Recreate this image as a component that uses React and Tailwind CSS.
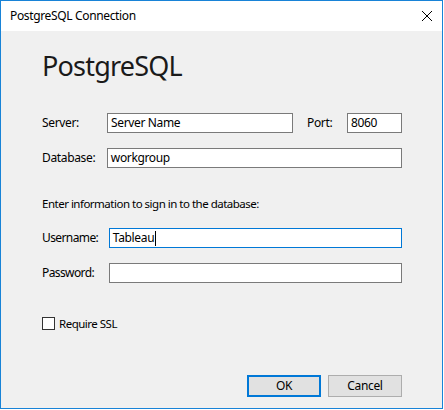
import React from "react";

const font = { fontFamily: '"Segoe UI", "Noto Sans", "Open Sans", sans-serif' };

function Field({ value, className = "", focused = false, cursor = false }) {
  return (
    <div
      className={`h-[20px] flex items-center px-[3px] bg-white border text-[12px] text-black ${
        focused ? "border-[#0078d7]" : "border-[#7a7a7a]"
      } ${className}`}
    >
      <span>{value}</span>
      {cursor && <span className="w-px h-[15px] bg-black ml-[1px]" />}
    </div>
  );
}

export default function App() {
  return (
    <div className="w-[444px] h-[410px] bg-white tracking-[-0.35px]" style={font}>
      <div className="w-[443px] h-[409px] border border-[#1883d7] flex flex-col bg-[#f0f0f0]">
        <div className="h-[30px] bg-white flex items-center justify-between pl-[9px] pr-[8px] text-[12px] text-black">
          <span>PostgreSQL Connection</span>
          <svg width="12" height="12" viewBox="0 0 12 12" className="mr-[1px]">
            <path d="M1 1 L11 11 M11 1 L1 11" stroke="#000" strokeWidth="1" fill="none" />
          </svg>
        </div>
        <div className="flex-1 flex flex-col pl-[41px] pr-[40px] pt-[21px] text-[12px] text-black">
          <div className="text-[27px] leading-[28px] tracking-[-0.8px] text-[#1a1a1a]">PostgreSQL</div>

          <div className="mt-[33px] flex items-center">
            <span className="w-[65px]">Server:</span>
            <Field value="Server Name" className="w-[186px]" />
            <span className="ml-[14px] w-[40px]">Port:</span>
            <Field value="8060" className="w-[55px]" />
          </div>

          <div className="mt-[15px] flex items-center">
            <span className="w-[65px]">Database:</span>
            <Field value="workgroup" className="w-[296px]" />
          </div>

          <div className="mt-[28px] leading-[16px] text-[11.5px] tracking-[-0.5px]">
            Enter information to sign in to the database:
          </div>

          <div className="mt-[16px] flex items-center">
            <span className="w-[67px] tracking-[-0.6px]">Username:</span>
            <Field value="Tableau" className="w-[294px]" focused cursor />
          </div>

          <div className="mt-[15px] flex items-center">
            <span className="w-[67px] tracking-[-0.6px]">Password:</span>
            <Field value="" className="w-[294px]" />
          </div>

          <div className="mt-[34px] flex items-center gap-[4px]">
            <span className="w-[13px] h-[13px] bg-white border border-[#333333]" />
            <span className="leading-[13px] text-[11.5px] tracking-[-0.5px]">Require SSL</span>
          </div>

          <div className="mt-auto mb-[11px] flex justify-end gap-[7px]">
            <button className="w-[74px] h-[22px] bg-[#e1e1e1] border-2 border-[#0078d7] text-[12px] text-black flex items-center justify-center">
              OK
            </button>
            <button className="w-[74px] h-[22px] bg-[#e1e1e1] border border-[#adadad] text-[12px] text-black flex items-center justify-center">
              Cancel
            </button>
          </div>
        </div>
      </div>
    </div>
  );
}
